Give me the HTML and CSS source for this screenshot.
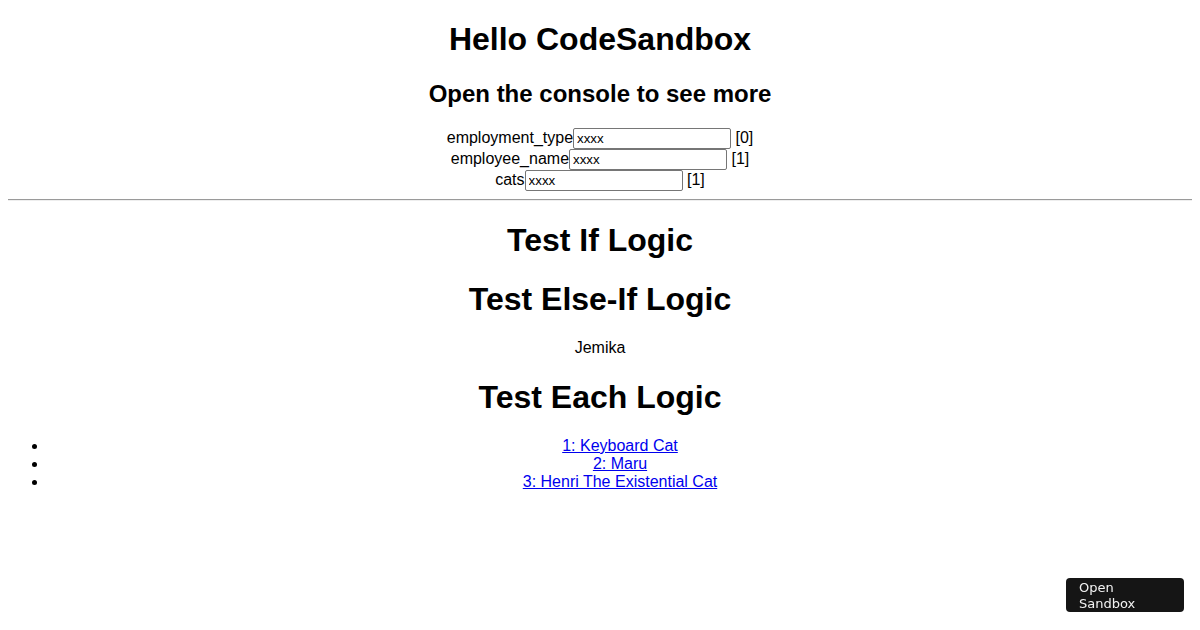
FILE: index.html
```html
<!DOCTYPE html>
<html>
<head>
<meta charset="utf-8">
<link rel="stylesheet" href="styles.css">
</head>
<body>
<div class="app">
  <h1>Hello CodeSandbox</h1>
  <h2>Open the console to see more</h2>
  <div class="row">employment_type<input class="field" type="text" value="xxxx"> [0]</div>
  <div class="row">employee_name<input class="field" type="text" value="xxxx"> [1]</div>
  <div class="row">cats<input class="field" type="text" value="xxxx"> [1]</div>
  <hr>
  <h1>Test If Logic</h1>
  <h1>Test Else-If Logic</h1>
  <div>Jemika</div>
  <h1>Test Each Logic</h1>
  <ul>
    <li><a href="#">1: Keyboard Cat</a></li>
    <li><a href="#">2: Maru</a></li>
    <li><a href="#">3: Henri The Existential Cat</a></li>
  </ul>
</div>
<a class="open-sandbox" href="#">Open Sandbox</a>
</body>
</html>
```

FILE: styles.css
```css
body {
  margin: 0 8px 8px;
  font-family: "Liberation Sans", Arial, sans-serif;
  font-size: 16px;
  color: #000;
  background: #fff;
}
.app {
  text-align: center;
}
.row {
  line-height: normal;
}
.field {
  font-family: "Liberation Sans", Arial, sans-serif;
  font-size: 13.333px;
  width: 158px;
  height: 21px;
  box-sizing: border-box;
  padding: 1px 3px;
  border: 1px solid #767676;
  border-radius: 2px;
  margin: 0;
  vertical-align: baseline;
}
hr {
  margin: 8px 0;
  border: none;
  border-top: 1px solid #9a9a9a;
  border-bottom: 1px solid #eeeeee;
}
a {
  color: #0000ee;
}
.open-sandbox {
  position: fixed;
  right: 16px;
  bottom: 18px;
  width: 118px;
  box-sizing: border-box;
  padding: 2px 40px 0 13px;
  background: #151515;
  color: #f2f2f2;
  border-radius: 4px;
  font-family: "DejaVu Sans", sans-serif;
  font-size: 13px;
  line-height: 16px;
  text-decoration: none;
  text-align: left;
}
```
